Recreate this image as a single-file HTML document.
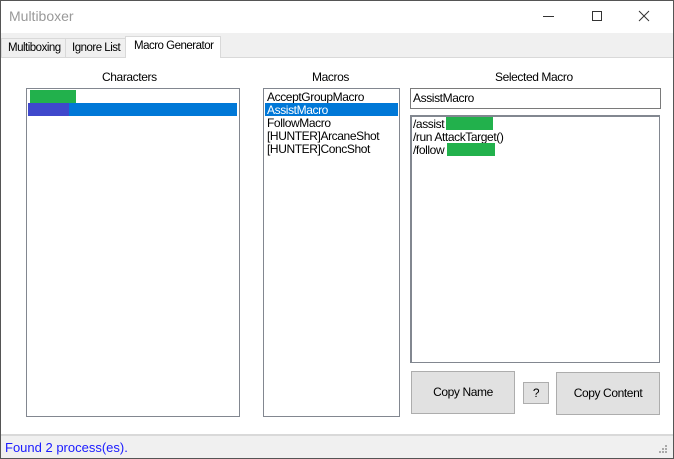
<!DOCTYPE html>
<html><head><style>
*{margin:0;padding:0;box-sizing:border-box}
body{width:674px;height:459px;overflow:hidden;background:#fff;font-family:"Liberation Sans",sans-serif;font-size:12px;color:#000;position:relative}
.a{position:absolute}
.win{left:0;top:0;width:674px;height:459px;border:1px solid #555;}
.t{white-space:nowrap;line-height:13px;letter-spacing:-0.4px}
.box{border:1px solid #828790;background:#fff}
.btn{background:#e1e1e1;border:1px solid #adadad;text-align:center;}
.tab{font-size:11.5px;letter-spacing:-0.5px;overflow:hidden}
.d{position:absolute;width:2px;height:2px;background:#aaa}
</style></head><body>
<div class="a win"></div>
<div class="a t" style="left:9px;top:10px;font-size:14px;color:#999;letter-spacing:0">Multiboxer</div>
<div class="a" style="left:543px;top:16px;width:11px;height:1px;background:#333"></div>
<div class="a" style="left:592px;top:11px;width:10px;height:10px;border:1px solid #333"></div>
<svg class="a" style="left:638px;top:10px" width="12" height="12"><path d="M1 1L11 11M11 1L1 11" stroke="#333" stroke-width="1"/></svg>
<div class="a" style="left:1px;top:33px;width:672px;height:24px;background:#f0f0f0"></div>
<div class="a t tab" style="left:1px;top:38px;width:65px;height:20px;border:1px solid #d9d9d9;background:#f0f0f0;padding:3px 0 0 6px">Multiboxing</div>
<div class="a t tab" style="left:65px;top:38px;width:61px;height:20px;border:1px solid #d9d9d9;background:#f0f0f0;padding:3px 0 0 6px">Ignore List</div>
<div class="a t tab" style="left:125px;top:36px;width:96px;height:22px;border:1px solid #d9d9d9;border-bottom:none;background:#fff;padding:3px 0 0 8px">Macro Generator</div>
<div class="a" style="left:1px;top:57px;width:124px;height:1px;background:#d9d9d9"></div>
<div class="a" style="left:220px;top:57px;width:453px;height:1px;background:#d9d9d9"></div>

<div class="a t" style="left:102px;top:71px">Characters</div>
<div class="a t" style="left:312px;top:71px">Macros</div>
<div class="a t" style="left:495px;top:71px">Selected Macro</div>

<div class="a box" style="left:26px;top:88px;width:214px;height:329px"></div>
<div class="a" style="left:30px;top:90px;width:46px;height:13px;background:#22b14c"></div>
<div class="a" style="left:28px;top:103px;width:209px;height:13px;background:#0078d7"></div>
<div class="a" style="left:28px;top:103px;width:41px;height:13px;background:#3f48cc"></div>

<div class="a box" style="left:263px;top:88px;width:137px;height:329px"></div>
<div class="a t" style="left:267px;top:91px">AcceptGroupMacro</div>
<div class="a" style="left:265px;top:103px;width:133px;height:13px;background:#0078d7"></div>
<div class="a t" style="left:267px;top:104px;color:#fff">AssistMacro</div>
<div class="a t" style="left:267px;top:117px">FollowMacro</div>
<div class="a t" style="left:267px;top:130px">[HUNTER]ArcaneShot</div>
<div class="a t" style="left:267px;top:143px">[HUNTER]ConcShot</div>

<div class="a" style="left:410px;top:88px;width:251px;height:21px;border:1px solid #7a7a7a"></div>
<div class="a t" style="left:413px;top:92px">AssistMacro</div>
<div class="a" style="left:410px;top:115px;width:250px;height:248px;border:1px solid #828790;border-top:2px solid #828790;border-left:2px solid #828790"></div>
<div class="a t" style="left:413px;top:118px">/assist</div>
<div class="a" style="left:446px;top:117px;width:47px;height:13px;background:#22b14c"></div>
<div class="a t" style="left:413px;top:131px">/run AttackTarget()</div>
<div class="a t" style="left:413px;top:144px">/follow</div>
<div class="a" style="left:447px;top:143px;width:48px;height:13px;background:#22b14c"></div>

<div class="a btn t" style="left:411px;top:371px;width:104px;height:43px;line-height:41px">Copy Name</div>
<div class="a btn t" style="left:523px;top:382px;width:26px;height:22px;line-height:20px">?</div>
<div class="a btn t" style="left:556px;top:372px;width:104px;height:43px;line-height:41px">Copy Content</div>

<div class="a" style="left:1px;top:434px;width:672px;height:24px;background:#f0f0f0;border-top:2px solid #d9d9d9"></div>
<div class="a t" style="left:5px;top:441px;color:#1a1aff;font-size:13px;letter-spacing:0">Found 2 process(es).</div>
<div class="d" style="left:665px;top:445px"></div>
<div class="d" style="left:662px;top:448px"></div><div class="d" style="left:665px;top:448px"></div>
<div class="d" style="left:659px;top:451px"></div><div class="d" style="left:662px;top:451px"></div><div class="d" style="left:665px;top:451px"></div>
</body></html>
